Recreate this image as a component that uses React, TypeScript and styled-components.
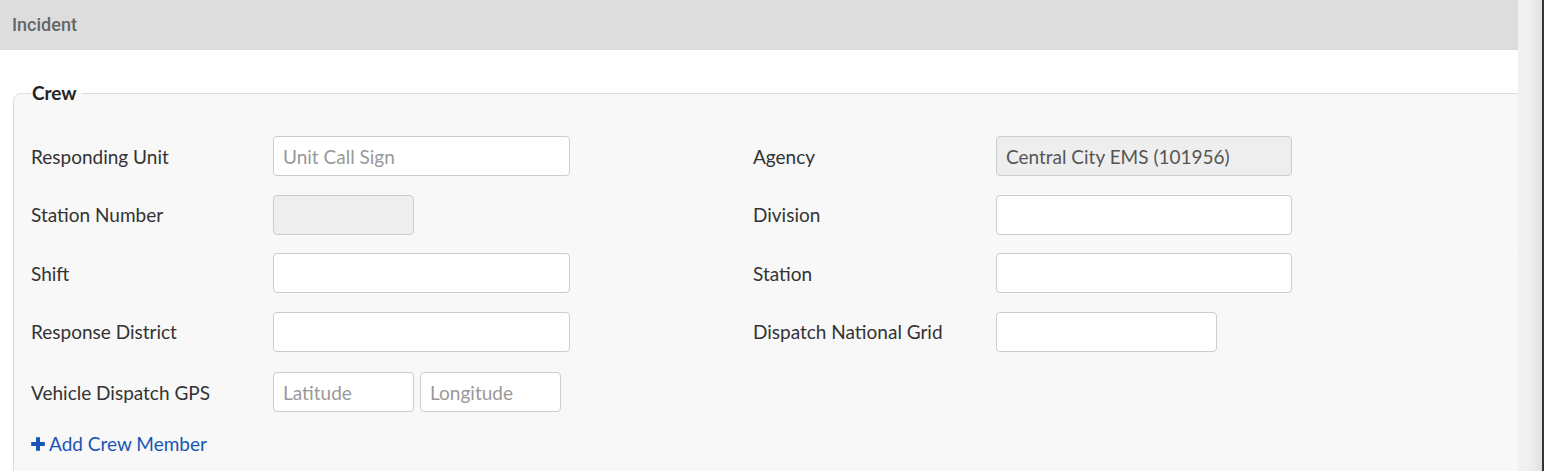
import styled, { createGlobalStyle } from 'styled-components';

const GlobalStyle = createGlobalStyle`
  html, body {
    margin: 0;
    padding: 0;
    background: #ffffff;
    overflow: hidden;
  }
  * {
    box-sizing: border-box;
  }
`;

type Field = {
  label: string;
  width?: number;
  placeholder?: string;
  value?: string;
  disabled?: boolean;
};

const leftFields: Field[] = [
  { label: 'Responding Unit', width: 297, placeholder: 'Unit Call Sign' },
  { label: 'Station Number', width: 141, disabled: true },
  { label: 'Shift', width: 297 },
  { label: 'Response District', width: 297 },
];

const rightFields: (Field | null)[] = [
  { label: 'Agency', width: 296, value: 'Central City EMS (101956)', disabled: true },
  { label: 'Division', width: 296 },
  { label: 'Station', width: 296 },
  { label: 'Dispatch National Grid', width: 221 },
];

const App = () => {
  return (
    <Page>
      <GlobalStyle />
      <Main>
        <Header>Incident</Header>
        <Body>
          <CrewSet>
            <Legend>Crew</Legend>
            <FormGrid>
              {leftFields.map((field, i) => {
                const right = rightFields[i];
                return (
                  <Row key={field.label}>
                    <Label>{field.label}</Label>
                    <FieldCell>
                      <TextInput
                        $width={field.width}
                        placeholder={field.placeholder}
                        defaultValue={field.value}
                        disabled={field.disabled}
                      />
                    </FieldCell>
                    {right && (
                      <>
                        <Label>{right.label}</Label>
                        <FieldCell>
                          <TextInput
                            $width={right.width}
                            placeholder={right.placeholder}
                            defaultValue={right.value}
                            disabled={right.disabled}
                          />
                        </FieldCell>
                      </>
                    )}
                  </Row>
                );
              })}
              <Row $spaced>
                <Label>Vehicle Dispatch GPS</Label>
                <FieldCell>
                  <GpsPair>
                    <TextInput $width={141} placeholder="Latitude" />
                    <TextInput $width={141} placeholder="Longitude" />
                  </GpsPair>
                </FieldCell>
              </Row>
            </FormGrid>
            <AddLink href="#">
              <PlusIcon viewBox="0 0 14 14" aria-hidden="true">
                <path d="M5 0.2h4v4.8h4.8v4H9v4.8H5V9H0.2V5H5z" />
              </PlusIcon>
              Add Crew Member
            </AddLink>
          </CrewSet>
        </Body>
      </Main>
      <ScrollTrack>
        <ScrollEdge />
      </ScrollTrack>
    </Page>
  );
};

export default App;

// Styled Components
const Page = styled.div`
  width: 100%;
  height: 471px;
  display: flex;
  flex-direction: row;
  overflow: hidden;
`;

const Main = styled.div`
  flex: 1;
  min-width: 0;
  display: flex;
  flex-direction: column;
  overflow: hidden;
`;

const Header = styled.div`
  height: 50px;
  flex-shrink: 0;
  display: flex;
  align-items: center;
  padding: 0 13px 1px 12px;
  background-color: #dddddd;
  color: #666666;
  font-family: Roboto, 'Liberation Sans', sans-serif;
  font-size: 18px;
  font-weight: 500;
`;

const Body = styled.div`
  padding: 31px 0 0 13px;
`;

const CrewSet = styled.fieldset`
  margin: 0 -20px 0 0;
  padding: 31px 0 30px 17px;
  min-width: 0;
  border: 1px solid #dcdcdc;
  border-radius: 8px 0 0 0;
  background-color: #f8f8f8;
  font-family: Lato, 'Open Sans', sans-serif;
`;

const Legend = styled.legend`
  padding: 0 5px 0 1px;
  margin-left: 0;
  font-size: 19px;
  font-weight: 700;
  line-height: 24px;
  color: #222222;
`;

const FormGrid = styled.div`
  display: flex;
  flex-direction: column;
  gap: 18.5px;
`;

const Row = styled.div<{ $spaced?: boolean }>`
  display: grid;
  grid-template-columns: 242px 480px 243px 1fr;
  align-items: center;
  min-height: 40px;
  margin-top: ${({ $spaced }) => ($spaced ? '2px' : '0')};
`;

const Label = styled.span`
  font-size: 19px;
  color: #333333;
`;

const FieldCell = styled.div`
  display: flex;
  align-items: center;
`;

const GpsPair = styled.div`
  display: flex;
  flex-direction: row;
  gap: 6px;
`;

const TextInput = styled.input<{ $width?: number }>`
  width: ${({ $width }) => ($width ? `${$width}px` : '100%')};
  height: 40px;
  padding: 0 9px;
  border: 1px solid #cccccc;
  border-radius: 4px;
  background-color: #ffffff;
  color: #555555;
  font-family: Lato, 'Open Sans', sans-serif;
  font-size: 19px;
  outline: none;

  &::placeholder {
    color: #999999;
  }

  &:disabled {
    background-color: #eeeeee;
    color: #555555;
    -webkit-text-fill-color: #555555;
    opacity: 1;
  }
`;

const AddLink = styled.a`
  display: inline-flex;
  align-items: center;
  gap: 4px;
  margin-top: 20px;
  color: #1a55b3;
  font-size: 19px;
  text-decoration: none;
`;

const PlusIcon = styled.svg`
  width: 14px;
  height: 14px;
  fill: currentColor;
`;

const ScrollTrack = styled.div`
  width: 26px;
  flex-shrink: 0;
  display: flex;
  justify-content: flex-end;
  background: linear-gradient(to right, #f1f1f1 0%, #eeeeee 50%, #dedede 100%);
`;

const ScrollEdge = styled.div`
  width: 2px;
  height: 100%;
  background-color: #333333;
`;
